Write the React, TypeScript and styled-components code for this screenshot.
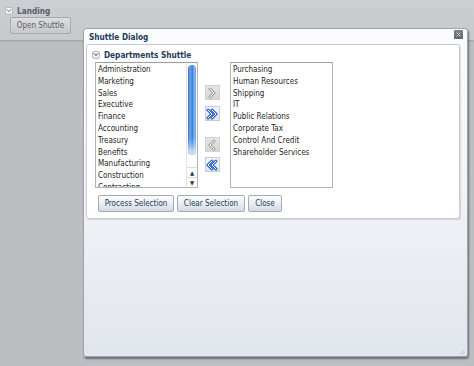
import styled, { createGlobalStyle } from "styled-components";

const GlobalStyle = createGlobalStyle`
  html, body {
    margin: 0;
    padding: 0;
    height: 100%;
  }
  body {
    background: #bcbec1;
    font-family: "DejaVu Sans Condensed", "DejaVu Sans", "Liberation Sans", sans-serif;
    font-size: 8px;
    color: #222;
    overflow: hidden;
  }
`;

const Page = styled.div`
  position: relative;
  width: 474px;
  height: 366px;
`;

const LandingPanel = styled.div`
  height: 40px;
  background: linear-gradient(#cdced1, #c7c9cc);
  box-shadow: 0 1px 2px rgba(0, 0, 0, 0.18);
  padding: 5px 0 0 5px;
  box-sizing: border-box;
`;

const PanelHeader = styled.div`
  display: flex;
  align-items: center;
  gap: 4px;
  height: 11px;
`;

const Disclosure = styled.span`
  display: inline-flex;
  align-items: center;
  justify-content: center;
  width: 8px;
  height: 8px;
  border: 1px solid #b7bcc3;
  border-radius: 2px;
  background: linear-gradient(#ffffff, #e2e6ec);
  box-sizing: border-box;
`;

const HeaderText = styled.span<{ $color: string }>`
  font-weight: bold;
  font-size: 8.2px;
  color: ${(p) => p.$color};
`;

const OpenButton = styled.button`
  margin: 1px 0 0 5px;
  height: 17px;
  width: 61px;
  padding: 0;
  border: 1px solid #a8aaae;
  border-radius: 2px;
  background: linear-gradient(#dcdde0, #c6c8cc);
  color: #5b5f66;
  font-family: inherit;
  font-size: 8px;
  white-space: nowrap;
`;

const Dialog = styled.div`
  position: absolute;
  left: 83px;
  top: 28px;
  width: 385px;
  height: 329px;
  box-sizing: border-box;
  border: 1px solid #9ea3a9;
  border-radius: 3px;
  background: linear-gradient(#fbfcfe 0%, #f1f3f7 50%, #e1e5ed 100%);
  box-shadow: 1px 2px 2px rgba(40, 45, 55, 0.55);
  padding: 0 7px 0 2px;
`;

const TitleBar = styled.div`
  height: 15px;
  display: flex;
  align-items: center;
  padding: 0 3px;
  font-weight: bold;
  color: #1f3c5c;
  font-size: 8.2px;
`;

const CloseIcon = styled.span`
  position: absolute;
  right: 4px;
  top: 1px;
  width: 9px;
  height: 9px;
  background: linear-gradient(#7b8085, #5f6469);
  border-radius: 1px;
  display: flex;
  align-items: center;
  justify-content: center;
`;

const InnerPanel = styled.div`
  height: 175px;
  box-sizing: border-box;
  background: #fff;
  border: 1px solid #c8ccd2;
  border-radius: 3px;
  box-shadow: 1px 1px 1px rgba(0, 0, 0, 0.12);
  padding: 4px 0 0 5px;
`;

const ShuttleRow = styled.div`
  display: flex;
  align-items: flex-start;
  margin: 2px 0 0 3px;
`;

const ListBox = styled.div<{ $width: number }>`
  width: ${(p) => p.$width}px;
  height: 126px;
  box-sizing: border-box;
  border: 1px solid #b0b3b8;
  border-top-color: #9a9da2;
  display: flex;
  background: #fff;
  overflow: hidden;
`;

const Items = styled.div`
  flex: 1;
  padding: 1px 0 0 2px;
  overflow: hidden;
`;

const Item = styled.div`
  height: 11.8px;
  line-height: 11.8px;
  white-space: nowrap;
  color: #1e1e1e;
`;

const ScrollBar = styled.div`
  width: 11px;
  display: flex;
  flex-direction: column;
  align-items: center;
  padding-top: 2px;
  box-sizing: border-box;
  border-left: 1px solid #e4e4e4;
`;

const Thumb = styled.div`
  width: 8px;
  height: 90px;
  border-radius: 4px;
  background: linear-gradient(
    90deg,
    #2e5fae 0%,
    #6ea6ec 25%,
    #3a7fdc 55%,
    #8dc0f5 85%,
    #4a80cc 100%
  );
  box-shadow: inset 0 -14px 10px -6px rgba(220, 232, 248, 0.9);
`;

const Track = styled.div`
  flex: 1;
`;

const Arrow = styled.div`
  width: 10px;
  height: 9px;
  display: flex;
  align-items: center;
  justify-content: center;
  border-top: 1px solid #dcdcdc;
  color: #333;
  font-size: 6px;
`;

const MoveColumn = styled.div`
  width: 15px;
  margin: 23px 10px 0 7px;
  display: flex;
  flex-direction: column;
`;

const MoveButton = styled.div<{ $disabled?: boolean; $gap: number }>`
  width: 15px;
  height: 15px;
  margin-top: ${(p) => p.$gap}px;
  box-sizing: border-box;
  border: 1px solid ${(p) => (p.$disabled ? "#d2d2d2" : "#c6cdd8")};
  background: ${(p) =>
    p.$disabled
      ? "linear-gradient(#e6e6e6, #d6d6d6)"
      : "linear-gradient(#f4f6fa, #dfe4ec)"};
  display: flex;
  align-items: center;
  justify-content: center;
`;

const ButtonRow = styled.div`
  display: flex;
  gap: 3px;
  margin: 7px 0 0 6px;
`;

const ActionButton = styled.button<{ $width: number }>`
  width: ${(p) => p.$width}px;
  height: 17px;
  padding: 0;
  border: 1px solid #a3abb7;
  border-radius: 2px;
  background: linear-gradient(#fdfdfe 0%, #e8ecf2 55%, #d3dae5 100%);
  color: #243c5a;
  font-family: inherit;
  font-size: 8px;
  white-space: nowrap;
  overflow: visible;
`;

const Grip = styled.span`
  position: absolute;
  right: 2px;
  bottom: 2px;
  width: 6px;
  height: 6px;
`;

const Chevron = ({ dir, double, active }: { dir: "r" | "l"; double?: boolean; active?: boolean }) => {
  const outer = active ? "#2c63c9" : "#a6a6a6";
  const one = (x: number) =>
    dir === "r" ? `M${x},2 L${x + 4},6 L${x},10` : `M${x + 4},2 L${x},6 L${x + 4},10`;
  const xs = double ? [2, 6] : [4];
  return (
    <svg width="13" height="12" viewBox="0 0 13 12">
      {xs.map((x) => (
        <g key={x}>
          <path d={one(x)} fill="none" stroke={outer} strokeWidth="3" strokeLinejoin="round" strokeLinecap="round" />
          <path d={one(x)} fill="none" stroke="#fff" strokeWidth="1" strokeLinejoin="round" strokeLinecap="round" />
        </g>
      ))}
    </svg>
  );
};

const DiscloseGlyph = ({ color }: { color: string }) => (
  <svg width="6" height="5" viewBox="0 0 6 5">
    <path d="M0.8,1.2 L3,3.6 L5.2,1.2" fill="none" stroke={color} strokeWidth="1" />
  </svg>
);

const available = [
  "Administration",
  "Marketing",
  "Sales",
  "Executive",
  "Finance",
  "Accounting",
  "Treasury",
  "Benefits",
  "Manufacturing",
  "Construction",
  "Contracting",
];

const selected = [
  "Purchasing",
  "Human Resources",
  "Shipping",
  "IT",
  "Public Relations",
  "Corporate Tax",
  "Control And Credit",
  "Shareholder Services",
];

export default function App() {
  return (
    <Page>
      <GlobalStyle />
      <LandingPanel>
        <PanelHeader>
          <Disclosure>
            <DiscloseGlyph color="#6b7280" />
          </Disclosure>
          <HeaderText $color="#56606d">Landing</HeaderText>
        </PanelHeader>
        <OpenButton>Open Shuttle</OpenButton>
      </LandingPanel>

      <Dialog>
        <TitleBar>Shuttle Dialog</TitleBar>
        <CloseIcon>
          <svg width="7" height="7" viewBox="0 0 7 7">
            <path d="M1.5,1.5 L5.5,5.5 M5.5,1.5 L1.5,5.5" stroke="#c9ccd0" strokeWidth="1" />
          </svg>
        </CloseIcon>
        <InnerPanel>
          <PanelHeader>
            <Disclosure>
              <DiscloseGlyph color="#34495e" />
            </Disclosure>
            <HeaderText $color="#1f3c5c">Departments Shuttle</HeaderText>
          </PanelHeader>
          <ShuttleRow>
            <ListBox $width={103}>
              <Items>
                {available.map((d) => (
                  <Item key={d}>{d}</Item>
                ))}
              </Items>
              <ScrollBar>
                <Thumb />
                <Track />
                <Arrow>▲</Arrow>
                <Arrow>▼</Arrow>
              </ScrollBar>
            </ListBox>
            <MoveColumn>
              <MoveButton $disabled $gap={0}>
                <Chevron dir="r" />
              </MoveButton>
              <MoveButton $gap={6}>
                <Chevron dir="r" double active />
              </MoveButton>
              <MoveButton $disabled $gap={16}>
                <Chevron dir="l" />
              </MoveButton>
              <MoveButton $gap={5}>
                <Chevron dir="l" double active />
              </MoveButton>
            </MoveColumn>
            <ListBox $width={103}>
              <Items>
                {selected.map((d) => (
                  <Item key={d}>{d}</Item>
                ))}
              </Items>
            </ListBox>
          </ShuttleRow>
          <ButtonRow>
            <ActionButton $width={76}>Process Selection</ActionButton>
            <ActionButton $width={68}>Clear Selection</ActionButton>
            <ActionButton $width={34}>Close</ActionButton>
          </ButtonRow>
        </InnerPanel>
        <Grip>
          <svg width="6" height="6" viewBox="0 0 6 6">
            <path d="M5.5,1 L1,5.5 M5.5,3.5 L3.5,5.5" stroke="#b5bac2" strokeWidth="0.8" />
          </svg>
        </Grip>
      </Dialog>
    </Page>
  );
}
